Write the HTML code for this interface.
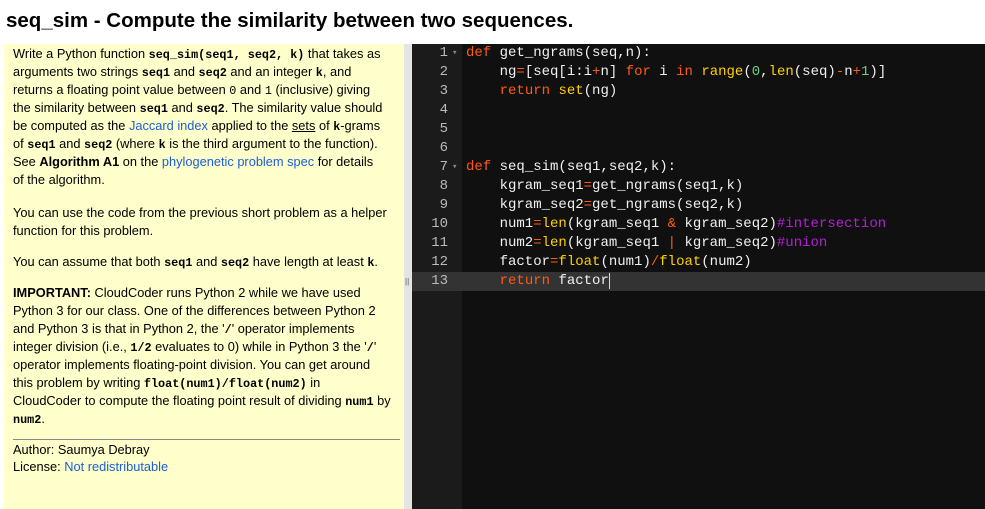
<!DOCTYPE html>
<html><head><meta charset="utf-8"><style>
body{margin:0;width:985px;height:509px;overflow:hidden;background:#fff;font-family:"Liberation Sans",Arial,sans-serif;position:relative}
h1{position:absolute;left:6px;top:9px;margin:0;font-size:20.5px;font-weight:bold;color:#000;white-space:nowrap}
#left{position:absolute;left:4px;top:44px;width:400px;height:465px;background:#ffffcc}
.t{position:absolute;left:9px;top:1px;font-size:12.8px;line-height:18px;color:#000;white-space:nowrap;height:18px}
code,.m{font-family:"Liberation Mono",monospace;font-weight:bold;font-size:11.8px}
a{color:#1a5fd6;text-decoration:none}
#hr{position:absolute;left:9px;top:395px;width:387px;border-top:1px solid #888}
#split{position:absolute;left:404px;top:44px;width:8px;height:465px;background:#e4e4e4}
#split span{position:absolute;left:1px;top:233px;font-size:8px;color:#555}
#ed{position:absolute;left:412px;top:44px;width:573px;height:465px;background:#101010}
#gut{position:absolute;left:0;top:0;width:50px;height:465px;background:#1b1b1b}
.ln{position:absolute;left:0;width:573px;height:19px;font-family:"Liberation Mono",monospace;font-size:14px;line-height:19px;white-space:pre;color:#f0f0f0}
.ln .n{position:absolute;left:0;width:36px;text-align:right;color:#bbb}
.ln .f{position:absolute;left:40px;color:#888;font-size:9px}
.ln .c{position:absolute;left:54px}
.act{background:#333}
.k{color:#ff5a14}.b{color:#ffd200}.o{color:#ff5a14}.d{color:#6ed07a}.cm{color:#b41fd6}
.cur{border-right:1px solid #ddd}
</style></head><body>
<h1>seq_sim - Compute the similarity between two sequences.</h1>
<div id="left">
<div class="t" style="top:1px">Write a Python function <code>seq_sim(seq1, seq2, k)</code> that takes as</div>
<div class="t" style="top:19px">arguments two strings <code>seq1</code> and <code>seq2</code> and an integer <code>k</code>, and</div>
<div class="t" style="top:37px">returns a floating point value between <span class="m" style="font-weight:normal">0</span> and <span class="m" style="font-weight:normal">1</span> (inclusive) giving</div>
<div class="t" style="top:55px">the similarity between <code>seq1</code> and <code>seq2</code>. The similarity value should</div>
<div class="t" style="top:73px">be computed as the <a>Jaccard index</a> applied to the <u>sets</u> of <code>k</code>-grams</div>
<div class="t" style="top:91px">of <code>seq1</code> and <code>seq2</code> (where <code>k</code> is the third argument to the function).</div>
<div class="t" style="top:109px">See <b>Algorithm A1</b> on the <a>phylogenetic problem spec</a> for details</div>
<div class="t" style="top:127px">of the algorithm.</div>
<div class="t" style="top:160px">You can use the code from the previous short problem as a helper</div>
<div class="t" style="top:178px">function for this problem.</div>
<div class="t" style="top:209px">You can assume that both <code>seq1</code> and <code>seq2</code> have length at least <code>k</code>.</div>
<div class="t" style="top:240px"><b>IMPORTANT:</b> CloudCoder runs Python 2 while we have used</div>
<div class="t" style="top:258px">Python 3 for our class. One of the differences between Python 2</div>
<div class="t" style="top:276px">and Python 3 is that in Python 2, the '<code>/</code>' operator implements</div>
<div class="t" style="top:294px">integer division (i.e., <code>1/2</code> evaluates to 0) while in Python 3 the '<code>/</code>'</div>
<div class="t" style="top:312px">operator implements floating-point division. You can get around</div>
<div class="t" style="top:330px">this problem by writing <code>float(num1)/float(num2)</code> in</div>
<div class="t" style="top:348px">CloudCoder to compute the floating point result of dividing <code>num1</code> by</div>
<div class="t" style="top:366px"><code>num2</code>.</div>
<div id="hr"></div>
<div class="t" style="top:397px">Author: Saumya Debray</div>
<div class="t" style="top:414px">License: <a>Not redistributable</a></div>
</div>
<div id="split"><span>||</span></div>
<div id="ed"><div id="gut"></div>
<div class="ln" style="top:0px"><span class="n">1</span><span class="f">▾</span><span class="c"><span class="k">def</span> get_ngrams(seq,n):</span></div>
<div class="ln" style="top:19px"><span class="n">2</span><span class="c">    ng<span class="o">=</span>[seq[i:i<span class="o">+</span>n] <span class="k">for</span> i <span class="k">in</span> <span class="b">range</span>(<span class="d">0</span>,<span class="b">len</span>(seq)<span class="o">-</span>n<span class="o">+</span><span class="d">1</span>)]</span></div>
<div class="ln" style="top:38px"><span class="n">3</span><span class="c">    <span class="k">return</span> <span class="b">set</span>(ng)</span></div>
<div class="ln" style="top:57px"><span class="n">4</span></div>
<div class="ln" style="top:76px"><span class="n">5</span></div>
<div class="ln" style="top:95px"><span class="n">6</span></div>
<div class="ln" style="top:114px"><span class="n">7</span><span class="f">▾</span><span class="c"><span class="k">def</span> seq_sim(seq1,seq2,k):</span></div>
<div class="ln" style="top:133px"><span class="n">8</span><span class="c">    kgram_seq1<span class="o">=</span>get_ngrams(seq1,k)</span></div>
<div class="ln" style="top:152px"><span class="n">9</span><span class="c">    kgram_seq2<span class="o">=</span>get_ngrams(seq2,k)</span></div>
<div class="ln" style="top:171px"><span class="n">10</span><span class="c">    num1<span class="o">=</span><span class="b">len</span>(kgram_seq1 <span class="o">&amp;</span> kgram_seq2)<span class="cm">#intersection</span></span></div>
<div class="ln" style="top:190px"><span class="n">11</span><span class="c">    num2<span class="o">=</span><span class="b">len</span>(kgram_seq1 <span class="o">|</span> kgram_seq2)<span class="cm">#union</span></span></div>
<div class="ln" style="top:209px"><span class="n">12</span><span class="c">    factor<span class="o">=</span><span class="b">float</span>(num1)<span class="o">/</span><span class="b">float</span>(num2)</span></div>
<div class="ln act" style="top:228px"><span class="n">13</span><span class="c">    <span class="k">return</span> <span class="cur">factor</span></span></div>
</div>
</body></html>
